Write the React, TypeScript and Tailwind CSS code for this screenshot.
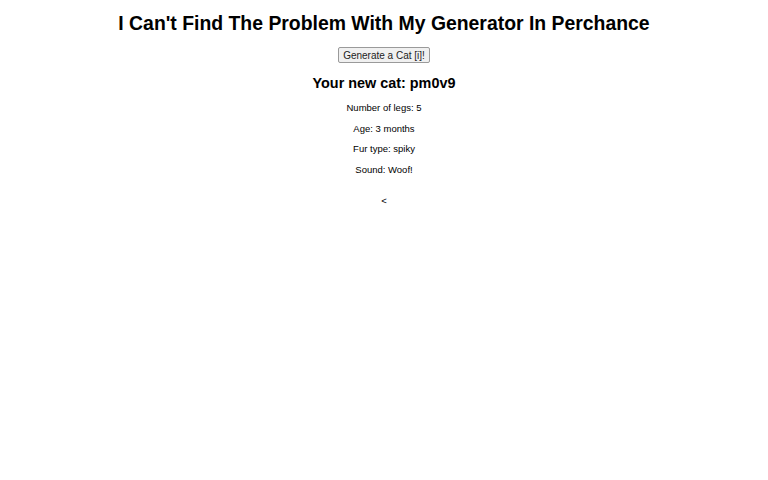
const stats = [
  "Number of legs: 5",
  "Age: 3 months",
  "Fur type: spiky",
  "Sound: Woof!",
];

export default function App() {
  return (
    <div className="min-h-screen bg-white text-black text-center font-['Liberation_Sans',Arial,sans-serif]">
      <h1 className="pt-[12px] text-[19.4px] leading-[23px] font-bold">
        I Can't Find The Problem With My Generator In Perchance
      </h1>
      <div className="mt-[12px] flex justify-center">
        <button className="h-[16px] px-[4px] text-[10px] leading-[13px] text-[#222] bg-[#f0f0f0] border border-[#9a9a9a] rounded-[2px]">
          Generate a Cat [i]!
        </button>
      </div>
      <h2 className="mt-[11px] text-[14.4px] leading-[18px] font-bold">Your new cat: pm0v9</h2>
      <div className="mt-[10px] flex flex-col text-[9.5px] leading-[12px] gap-[8.5px]">
        {stats.map((s) => (
          <p key={s}>{s}</p>
        ))}
      </div>
      <p className="mt-[19px] text-[9.5px] leading-[12px]">&lt;</p>
    </div>
  );
}
